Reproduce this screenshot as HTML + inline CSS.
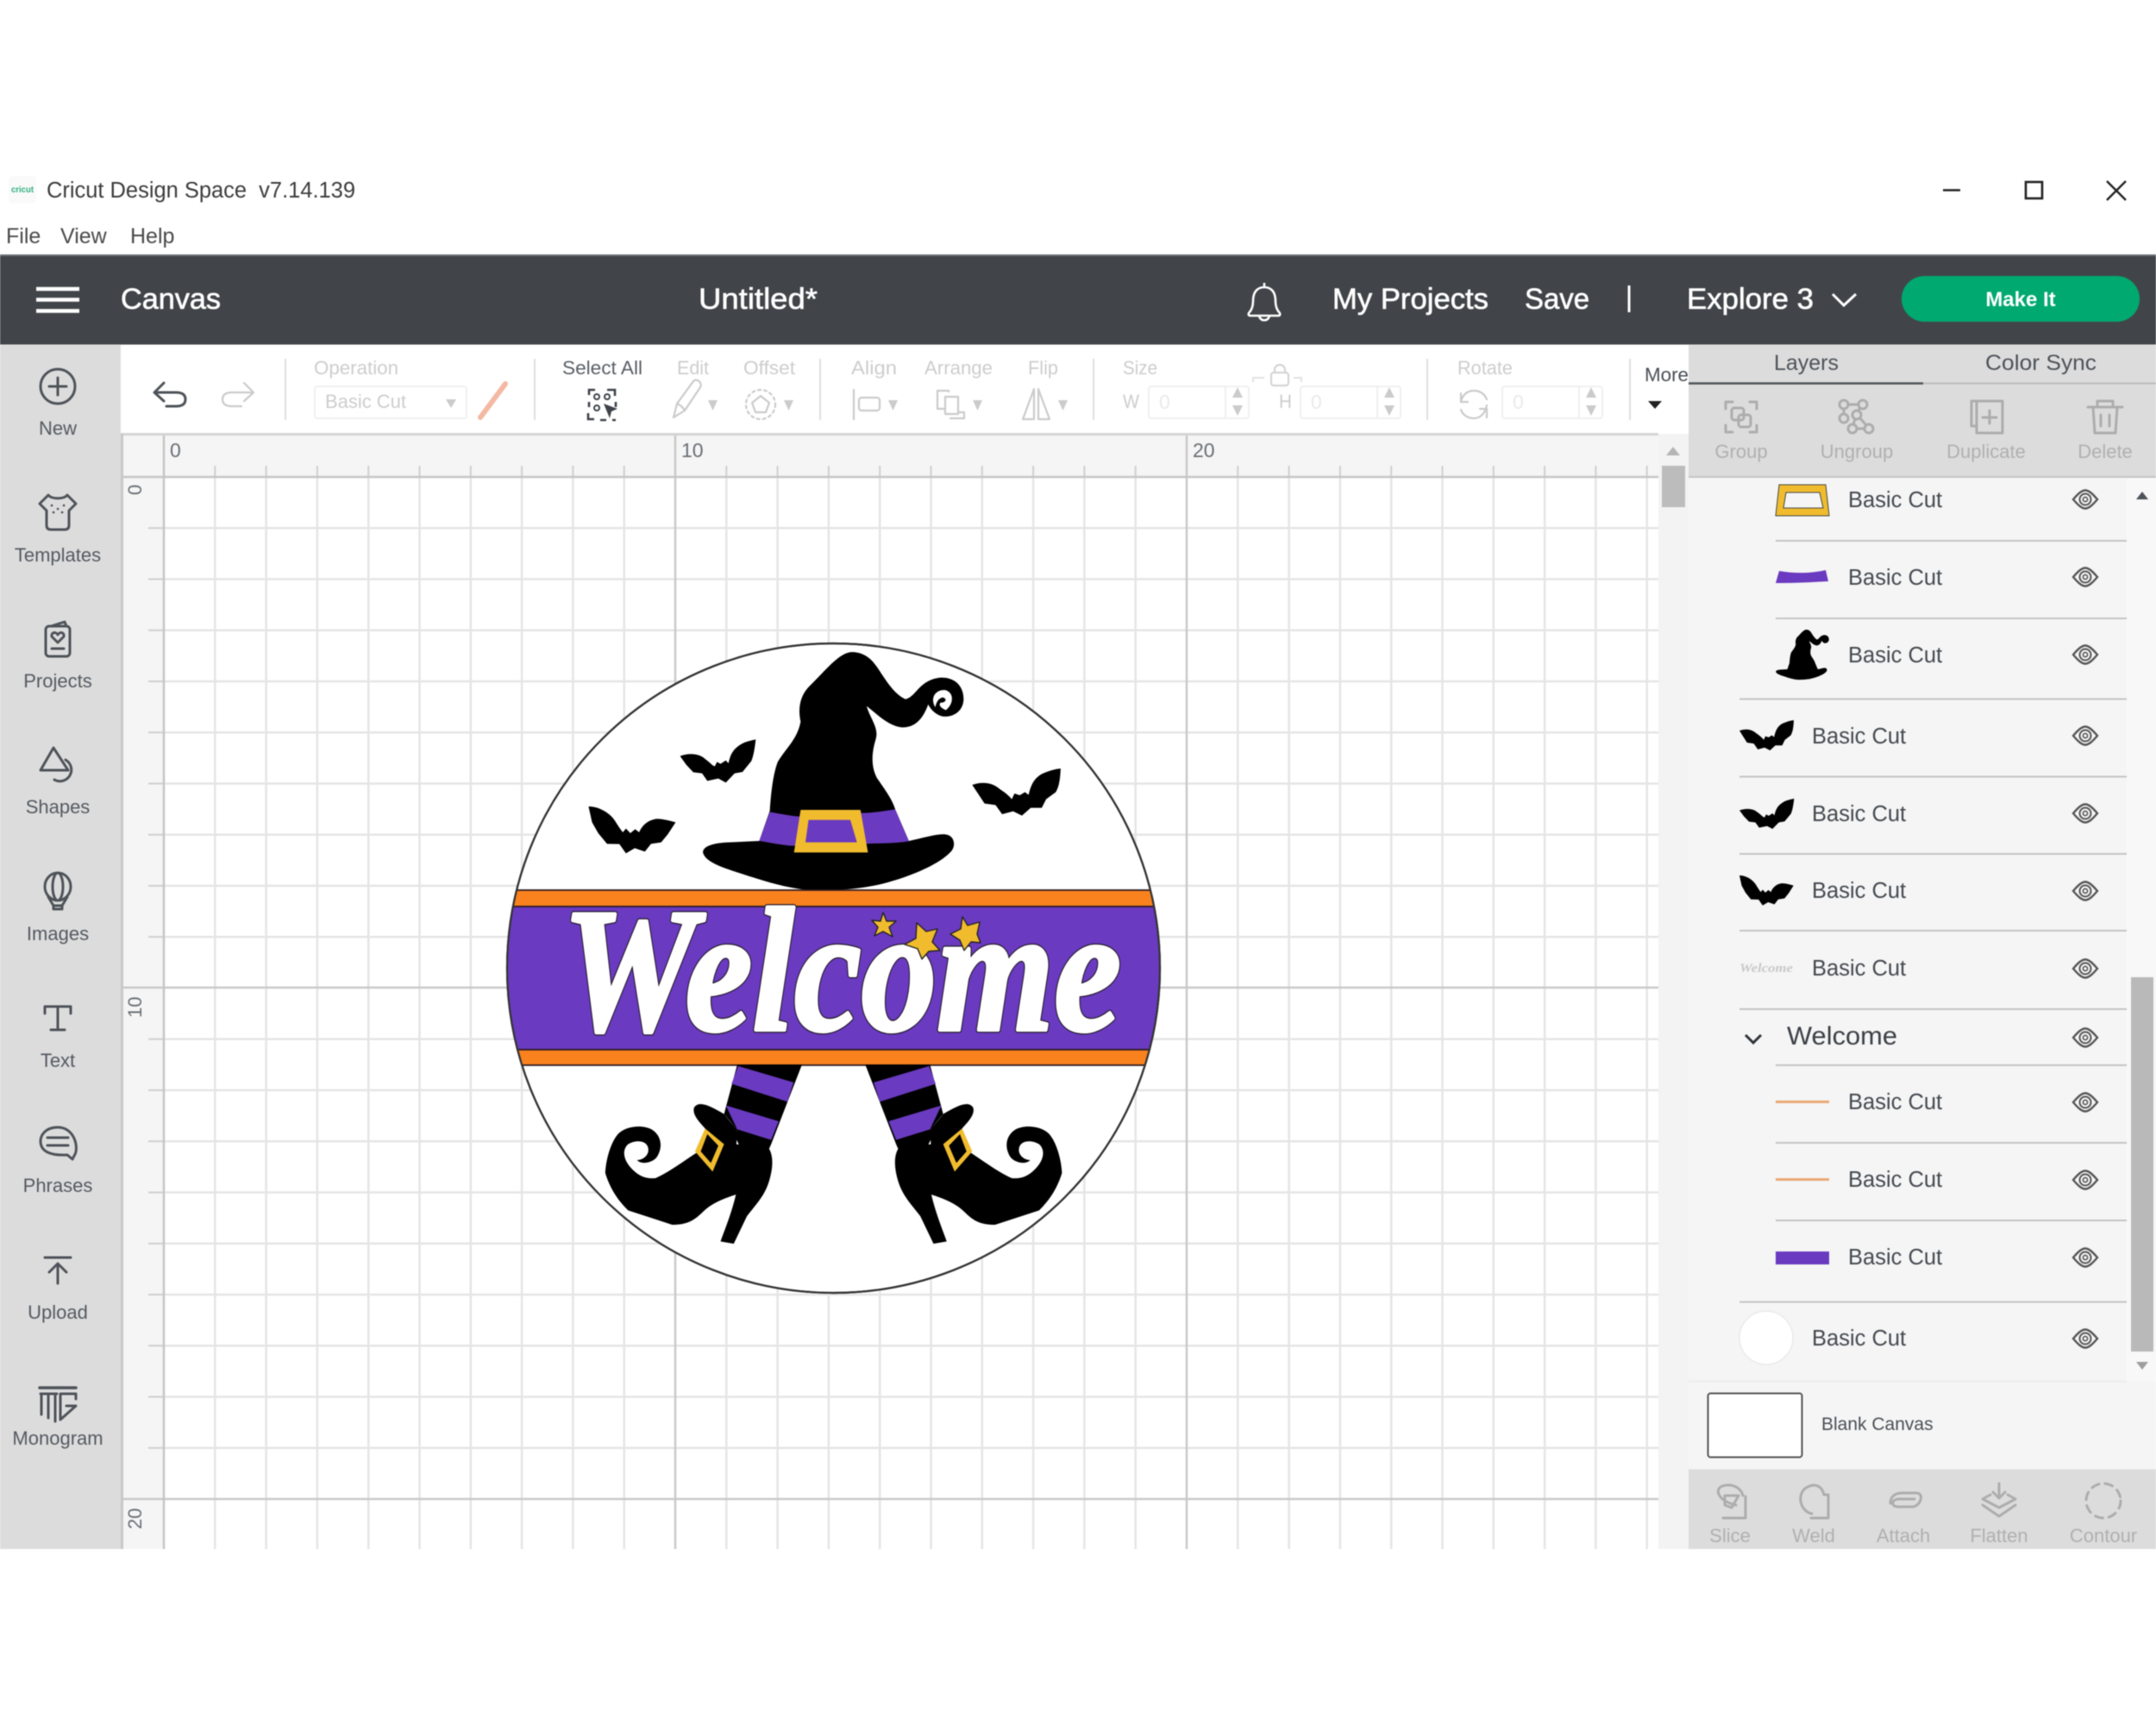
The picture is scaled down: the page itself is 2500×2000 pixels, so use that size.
<!DOCTYPE html>
<html><head><meta charset="utf-8"><title>Cricut Design Space</title>
<style>
html,body{margin:0;padding:0;background:#fff;width:2500px;height:2000px;overflow:hidden}
svg{display:block;filter:blur(.6px)}
text{font-family:"Liberation Sans",sans-serif}
.side{font-size:22px;fill:#555a61;text-anchor:middle}
.tb{font-size:22px;fill:#cdcdcd}
.nav{font-size:34px;fill:#fff;stroke:#fff;stroke-width:.6px}
.row{font-size:25.5px;fill:#454a50}
.act{font-size:22px;fill:#b0b0b0;text-anchor:middle}
.ic{fill:none;stroke:#4e5359;stroke-width:3;stroke-linecap:round;stroke-linejoin:round}
.ti{fill:none;stroke:#cbcbcb;stroke-width:2.2;stroke-linejoin:round;stroke-linecap:round}
.pi{fill:none;stroke:#adadad;stroke-width:3;stroke-linejoin:round;stroke-linecap:round}
.sep{stroke:#dedede;stroke-width:2}
</style></head><body>
<svg xmlns="http://www.w3.org/2000/svg" width="2500" height="2000" viewBox="0 0 2500 2000">
<defs>
<path id="vg" d="M249.3 540V1796M308.6 540V1796M367.9 540V1796M427.2 540V1796M486.5 540V1796M545.8 540V1796M605.1 540V1796M664.4 540V1796M723.7 540V1796M842.3 540V1796M901.6 540V1796M960.9 540V1796M1020.2 540V1796M1079.5 540V1796M1138.8 540V1796M1198.1 540V1796M1257.4 540V1796M1316.7 540V1796M1435.3 540V1796M1494.6 540V1796M1553.9 540V1796M1613.2 540V1796M1672.5 540V1796M1731.8 540V1796M1791.1 540V1796M1850.4 540V1796M1909.7 540V1796M172 612.3H1923M172 671.5H1923M172 730.8H1923M172 790H1923M172 849.3H1923M172 908.5H1923M172 967.8H1923M172 1027H1923M172 1086.3H1923M172 1204.8H1923M172 1264H1923M172 1323.3H1923M172 1382.5H1923M172 1441.8H1923M172 1501H1923M172 1560.3H1923M172 1619.5H1923M172 1678.8H1923"/>
<clipPath id="cv"><rect x="190" y="553" width="1733" height="1243"/></clipPath>
<clipPath id="cr"><path d="M190 540H1923V553H190ZM172 553H190V1796H172Z"/></clipPath>
<clipPath id="disc"><ellipse cx="966.5" cy="1122.5" rx="378.5" ry="376.5"/></clipPath>
<clipPath id="bot"><rect x="1958" y="1703" width="542" height="93"/></clipPath>
<path id="hat" d="M840 108C870 110 885 135 900 170C915 205 935 255 960 272C985 265 990 205 1040 197C1080 195 1095 240 1092 280C1088 320 1065 335 1045 332C1025 325 1015 300 1012 290C1005 320 990 370 955 370C925 368 900 330 872 296C880 340 900 370 893 410C885 450 880 500 895 545C915 590 930 620 937 655L968 765C1000 755 1030 740 1050 742C1072 745 1075 780 1065 800C1045 835 1000 870 950 895C900 920 860 935 760 938C700 935 640 905 590 880C550 860 505 840 500 805C500 785 520 772 560 770L628 765L652 660C655 590 660 530 670 490C690 440 715 410 722 350C715 300 722 260 740 230C780 170 810 108 840 108Z"/>
<path id="batA" d="M448 470C465 460 490 458 505 480C515 490 522 505 527 505L532 490L540 497L552 485L558 495C562 470 565 450 585 430C595 420 610 415 620 412C618 440 615 470 610 487L590 525L572 530L552 562L535 548L510 556L498 530L478 526L462 500Z"/>
<path id="batB" d="M240 645C265 645 290 670 300 695C308 715 315 730 318 735L325 722L335 738L346 724L355 735C362 710 375 692 395 688C410 688 425 695 438 700L420 742L405 770L382 775L368 802L345 790L325 808L310 776L282 775L262 738L248 700Z"/>
<path id="batC" d="M1112 570C1130 560 1155 558 1175 585C1190 600 1198 612 1202 620L1208 600L1220 606L1232 595L1240 605C1245 575 1250 550 1270 532C1285 522 1300 515 1313 513C1312 545 1310 575 1302 595L1280 620L1270 650L1245 650L1225 677L1205 662L1180 672L1165 640L1140 635L1125 600Z"/>
<path id="boot" d="M480 552C490 530 510 540 548 575C560 600 570 615 578 630L576 680L650 695C660 720 660 760 650 810C640 860 620 890 600 930L570 1026L540 1018C550 975 565 920 575 855C545 870 520 885 500 915C480 945 465 960 430 960L330 910C310 880 290 840 278 780C280 720 295 660 310 640C330 615 365 612 385 630C405 650 410 690 395 725C385 745 360 752 350 735C365 735 380 715 375 690C370 665 345 665 330 680C315 700 318 740 345 775C360 795 375 800 392 798C420 780 455 740 490 705L505 625C490 600 475 575 480 552Z"/>
<symbol id="eye" viewBox="0 0 32 24" overflow="visible"><path d="M2 12C8 5 12 1.500 16 1.500C20 1.500 24 5 30 12C24 19 20 22.500 16 22.500C12 22.500 8 19 2 12Z" fill="none" stroke="#555" stroke-width="2.400"/><circle cx="16" cy="12" r="6.500" fill="none" stroke="#555" stroke-width="2"/><circle cx="16" cy="12" r="2.600" fill="none" stroke="#555" stroke-width="1.600"/></symbol>
</defs>

<rect width="2500" height="2000" fill="#fff"/>

<!-- title bar -->
<rect x="10" y="204" width="32" height="32" rx="5" fill="#fafafa"/>
<text x="13" y="223" font-size="10" font-weight="bold" fill="#2fae80" textLength="26" lengthAdjust="spacingAndGlyphs">cricut</text>
<text x="54" y="229" font-size="25.500" fill="#3c3c3c" textLength="358" lengthAdjust="spacingAndGlyphs" xml:space="preserve">Cricut Design Space  v7.14.139</text>
<text x="7" y="282" font-size="25" fill="#4a4a4a">File</text>
<text x="70" y="282" font-size="25" fill="#4a4a4a">View</text>
<text x="151" y="282" font-size="25" fill="#4a4a4a">Help</text>
<path d="M2253 220.500H2273" stroke="#222" stroke-width="2.400"/>
<rect x="2349" y="211" width="19" height="19" fill="none" stroke="#222" stroke-width="2.600"/>
<path d="M2443 210L2465 232M2465 210L2443 232" stroke="#222" stroke-width="2.400"/>

<!-- header -->
<rect x="0" y="295" width="2500" height="104.500" fill="#414549"/>
<rect x="0" y="295" width="2500" height="2" fill="#6c7074"/>
<path d="M42 335H92M42 347.500H92M42 360.500H92" stroke="#fff" stroke-width="4.500"/>
<text class="nav" x="140" y="358" textLength="116" lengthAdjust="spacingAndGlyphs">Canvas</text>
<text class="nav" x="810" y="358" textLength="138" lengthAdjust="spacingAndGlyphs">Untitled*</text>
<path d="M1466 328V333M1466 333C1456 333 1453 341 1453 349C1453 356 1451 360 1448 363Q1447 366 1450 366H1482Q1485 366 1484 363C1481 360 1479 356 1479 349C1479 341 1476 333 1466 333ZM1460 366C1461 373 1471 373 1472 366" fill="none" stroke="#fff" stroke-width="2.600" stroke-linejoin="round"/>
<text class="nav" x="1545" y="358" textLength="181" lengthAdjust="spacingAndGlyphs">My Projects</text>
<text class="nav" x="1768" y="358" textLength="75" lengthAdjust="spacingAndGlyphs">Save</text>
<rect x="1887.500" y="331" width="3" height="31" fill="#fff"/>
<text class="nav" x="1956" y="358" textLength="147" lengthAdjust="spacingAndGlyphs">Explore 3</text>
<path d="M2125 341L2138 354L2152 341" fill="none" stroke="#fff" stroke-width="3"/>
<rect x="2205" y="320" width="276" height="53" rx="26.500" fill="#00a96f"/>
<text x="2343" y="355" font-size="24" font-weight="bold" fill="#fff" text-anchor="middle">Make It</text>

<!-- left sidebar -->
<rect x="0" y="400" width="140" height="1396" fill="#dcdcdc"/>

<!-- toolbar -->
<rect x="140" y="400" width="1818" height="103" fill="#fff"/>

<!-- canvas + rulers -->
<rect x="140" y="503" width="1783" height="1293" fill="#fff"/>
<rect x="140" y="505" width="1783" height="48" fill="#f5f5f5"/>
<rect x="140" y="505" width="50" height="1291" fill="#f5f5f5"/>
<use href="#vg" fill="none" stroke="#e5e5e5" stroke-width="2.500" clip-path="url(#cv)"/>
<use href="#vg" fill="none" stroke="#cfcfcf" stroke-width="2" clip-path="url(#cr)"/>
<path d="M783 505V1796M1376 505V1796M140 1145H1923M140 1738H1923" stroke="#c9c9c9" stroke-width="2.500" fill="none"/>
<path d="M190 505V1796M140 553H1923" stroke="#c6c6c6" stroke-width="2.500" fill="none"/>
<rect x="140" y="502" width="1783" height="3" fill="#d4d4d4"/>
<rect x="140" y="503" width="3" height="1293" fill="#c8c8c8"/>
<text x="197" y="530" font-size="23" fill="#6a6f75">0</text>
<text x="790" y="530" font-size="23" fill="#6a6f75">10</text>
<text x="1383" y="530" font-size="23" fill="#6a6f75">20</text>
<text transform="translate(164 574) rotate(-90)" font-size="22" fill="#6a6f75">0</text>
<text transform="translate(164 1180) rotate(-90)" font-size="22" fill="#6a6f75">10</text>
<text transform="translate(164 1773) rotate(-90)" font-size="22" fill="#6a6f75">20</text>

<!-- canvas scrollbar -->
<rect x="1923" y="503" width="35" height="1293" fill="#f3f3f3"/>
<path d="M1932 528L1940 518L1948 528Z" fill="#b5b5b5"/>
<rect x="1927" y="540" width="27" height="48" fill="#bcbcbc"/>

<!-- ARTWORK -->
<ellipse cx="966.500" cy="1122.500" rx="378.500" ry="376.500" fill="#fff" stroke="#333" stroke-width="2.200"/>
<g transform="translate(560 720) scale(.5102 .33333)">
<use href="#hat" fill="#000"/>
<path d="M652 664C680 672 700 678 720 680L860 668C885 668 915 660 937 655L968 766C930 775 900 772 870 775L705 782C680 780 650 770 628 765Z" fill="#6a3ac0"/>
<path d="M1028 300C1015 265 1030 238 1050 240C1072 248 1070 290 1052 310C1040 302 1035 292 1040 284C1052 285 1056 270 1045 266C1035 268 1030 285 1028 300Z" fill="#fff"/>
<path d="M722 657H858L875 805H707ZM740 692L733 770H850L835 692Z" fill="#f0bc2e" fill-rule="evenodd"/>
<use href="#batA" fill="#000"/>
<use href="#batB" fill="#000"/>
<use href="#batC" fill="#000"/>
</g>
<g clip-path="url(#disc)">
<rect x="580" y="1032" width="780" height="19" fill="#f9821e"/>
<rect x="580" y="1051" width="780" height="166" fill="#6a3ac0"/>
<rect x="580" y="1217" width="780" height="18" fill="#f9821e"/>
<path d="M580 1032H1360M580 1051H1360M580 1217H1360M580 1235H1360" stroke="#2a1a22" stroke-width="1.800"/>
</g>
<ellipse cx="966.500" cy="1122.500" rx="378.500" ry="376.500" fill="none" stroke="#333" stroke-width="2.200"/>
<text x="652" y="1194" font-size="205" font-style="italic" font-weight="bold" fill="#fff" stroke="#241a2a" stroke-width="7" stroke-linejoin="round" textLength="648" lengthAdjust="spacingAndGlyphs" style="font-family:'Liberation Serif',serif">Welcome</text>
<text x="652" y="1194" font-size="205" font-style="italic" font-weight="bold" fill="#fff" stroke="#fff" stroke-width="4.500" stroke-linejoin="round" textLength="648" lengthAdjust="spacingAndGlyphs" style="font-family:'Liberation Serif',serif">Welcome</text>
<g fill="#f0bc2e" stroke="#222" stroke-width="1.400" stroke-linejoin="round">
<path d="M1024 1058L1028 1068L1039 1068L1031 1075L1035 1086L1024 1080L1014 1085L1018 1075L1011 1067L1021 1068Z"/>
<path d="M1063 1070L1074 1080L1087 1077L1081 1092L1090 1102L1077 1103L1069 1112L1064 1100L1049 1095L1062 1088Z"/>
<path d="M1116 1063L1122 1073L1136 1069L1133 1083L1137 1093L1126 1092L1118 1102L1113 1090L1102 1083L1114 1077Z"/>
</g>
<g transform="translate(560 1100) scale(.5102 .33333)">
<g>
<path d="M578 403H725L655 680L650 697L585 692L575 660L578 630L548 575Z" fill="#000"/>
<path d="M580 408L706 465L692 532L565 470ZM552 545L672 600L655 665L578 628Z" fill="#6a3ac0"/>
<use href="#boot" fill="#000"/>
<path d="M505 625L548 680L522 775L482 705ZM510 645L495 705L518 745L535 685Z" fill="#f0bc2e" fill-rule="evenodd"/>
</g>
<g transform="translate(1594 0) scale(-1 1)">
<path d="M578 403H725L655 680L650 697L585 692L575 660L578 630L548 575Z" fill="#000"/>
<path d="M580 408L706 465L692 532L565 470ZM552 545L672 600L655 665L578 628Z" fill="#6a3ac0"/>
<use href="#boot" fill="#000"/>
<path d="M505 625L548 680L522 775L482 705ZM510 645L495 705L518 745L535 685Z" fill="#f0bc2e" fill-rule="evenodd"/>
</g>
</g>

<!-- sidebar icons + labels -->
<g class="ic">
<circle cx="67" cy="448" r="20"/><path d="M67 438V458M57 448H77"/>
<path d="M56 574C60 579 74 579 78 574L88 584L80 592V609Q80 614 75 614H59Q54 614 54 609V592L46 584Z"/>
<path d="M60 586h.1M74 586h.1M62 594h.1M72 594h.1M67 590h.1" stroke-width="2.600"/>
<rect x="53" y="726" width="28" height="35" rx="4"/><path d="M59 726L75 721L77 726M60 752H74M67 745L60 738C59 733 65 732 67 736C69 732 75 733 74 738Z"/>
<path d="M62 867L47 893H79Z"/><path d="M63 904A13 13 0 1 0 76 881"/>
<ellipse cx="67" cy="1028" rx="15" ry="16"/><ellipse cx="67" cy="1028" rx="6" ry="16"/><path d="M56 1040L62 1050H72L78 1040M62 1050V1054H72V1050"/>
<path d="M52 1175V1167H82V1175M67 1167V1194M59 1194H75"/>
<path d="M86 1340C92 1332 87 1307 67 1307C52 1307 47 1317 47 1323C47 1335 58 1340 78 1339L84 1344ZM55 1319H79M55 1328H79"/>
<path d="M52 1458H82M67 1488V1466M57 1475L67 1465L77 1475"/>
<path d="M46 1609H88" stroke-width="3.500"/><path d="M47 1616H66M48 1616V1640M56 1616V1644M64 1616V1648M70 1616V1646L88 1630H77M70 1616H88V1622"/>
</g>
<text class="side" x="67" y="504">New</text>
<text class="side" x="67" y="651">Templates</text>
<text class="side" x="67" y="797">Projects</text>
<text class="side" x="67" y="943">Shapes</text>
<text class="side" x="67" y="1090">Images</text>
<text class="side" x="67" y="1237">Text</text>
<text class="side" x="67" y="1382">Phrases</text>
<text class="side" x="67" y="1529">Upload</text>
<text class="side" x="67" y="1675">Monogram</text>

<!-- toolbar contents -->
<path d="M190 444L179 455L190 465M180 455H204Q215 455 215 463Q215 471 204 471H193" fill="none" stroke="#4e5359" stroke-width="3" stroke-linecap="round" stroke-linejoin="round"/>
<path d="M283 444L294 455L283 465M293 455H269Q258 455 258 463Q258 471 269 471H280" class="ti" stroke-width="3"/>
<path class="sep" d="M331 416V487M620 416V487M951 416V487M1268 416V487M1655 416V487M1890 416V487"/>
<text class="tb" x="364" y="434" textLength="98" lengthAdjust="spacingAndGlyphs">Operation</text>
<rect x="365" y="448" width="176" height="37" rx="3" fill="#fff" stroke="#f0f0f0" stroke-width="2"/>
<text class="tb" x="377" y="473" textLength="94" lengthAdjust="spacingAndGlyphs">Basic Cut</text>
<path d="M517 463H529L523 473Z" fill="#cbcbcb"/>
<path d="M557 484L586 445" stroke="#f4b9a2" stroke-width="6" stroke-linecap="round"/>
<text x="652" y="434" font-size="22" fill="#5a5f66" textLength="93" lengthAdjust="spacingAndGlyphs">Select All</text>
<path d="M683 458V452H690M704 452H713V459M714 466V472M683 466V472M682 479V486H689M696 487H703M710 487H714" fill="none" stroke="#3e4349" stroke-width="2.600"/>
<circle cx="692" cy="460" r="3" fill="none" stroke="#3e4349" stroke-width="2"/><circle cx="704" cy="460" r="3" fill="none" stroke="#3e4349" stroke-width="2"/><circle cx="692" cy="473" r="3" fill="none" stroke="#3e4349" stroke-width="2"/>
<path d="M700 468L716 474L709 477L707 485Z" fill="#3e4349"/>
<text class="tb" x="785" y="434" textLength="37" lengthAdjust="spacingAndGlyphs">Edit</text>
<path class="ti" d="M781 484L785 468L804 442C807 438 815 443 812 449L794 476ZM785 468C788 469 792 472 794 476"/>
<path d="M821 464H832L826.500 476Z" fill="#cbcbcb"/>
<text class="tb" x="862" y="434" textLength="60" lengthAdjust="spacingAndGlyphs">Offset</text>
<circle class="ti" cx="882" cy="469" r="17" stroke-dasharray="3 4"/><path class="ti" d="M882 459L892 467L888 478H876L872 467Z"/>
<path d="M909 464H920L914.500 476Z" fill="#cbcbcb"/>
<text class="tb" x="987" y="434" textLength="53" lengthAdjust="spacingAndGlyphs">Align</text>
<path class="ti" d="M990 452V486"/><rect class="ti" x="996" y="461" width="24" height="15" rx="3"/>
<path d="M1030 464H1041L1035.500 476Z" fill="#cbcbcb"/>
<text class="tb" x="1072" y="434" textLength="79" lengthAdjust="spacingAndGlyphs">Arrange</text>
<path class="ti" d="M1100 454V453H1087V474H1095M1096 460H1111V480H1096ZM1111 478H1118V485H1102"/>
<path d="M1128 464H1139L1133.500 476Z" fill="#cbcbcb"/>
<text class="tb" x="1192" y="434" textLength="35" lengthAdjust="spacingAndGlyphs">Flip</text>
<path class="ti" d="M1199 451L1186 486H1199ZM1204 451L1217 486H1204Z"/>
<path d="M1227 464H1238L1232.500 476Z" fill="#cbcbcb"/>
<text class="tb" x="1302" y="434" textLength="40" lengthAdjust="spacingAndGlyphs">Size</text>
<text class="tb" x="1302" y="473" textLength="19" lengthAdjust="spacingAndGlyphs">W</text>
<rect x="1332" y="448" width="116" height="37" rx="3" fill="#fff" stroke="#f0f0f0" stroke-width="2"/>
<text x="1344" y="474" font-size="23" fill="#eaeaea">0</text>
<path d="M1421 448V485" stroke="#f0f0f0" stroke-width="2"/>
<path d="M1429 461H1441L1435 449ZM1429 470H1441L1435 482Z" fill="#cbcbcb"/>
<path d="M1453 443V438H1466M1500 438H1509V443" fill="none" stroke="#e2e2e2" stroke-width="2"/>
<rect x="1474" y="432" width="20" height="15" rx="3" fill="none" stroke="#d4d4d4" stroke-width="2.200"/><path d="M1478 432V429C1478 421 1490 421 1490 429V432M1484 440h.1" fill="none" stroke="#d4d4d4" stroke-width="2.200"/>
<text class="tb" x="1483" y="473" textLength="15" lengthAdjust="spacingAndGlyphs">H</text>
<rect x="1508" y="448" width="116" height="37" rx="3" fill="#fff" stroke="#f0f0f0" stroke-width="2"/>
<text x="1520" y="474" font-size="23" fill="#eaeaea">0</text>
<path d="M1597 448V485" stroke="#f0f0f0" stroke-width="2"/>
<path d="M1605 461H1617L1611 449ZM1605 470H1617L1611 482Z" fill="#cbcbcb"/>
<text class="tb" x="1690" y="434" textLength="64" lengthAdjust="spacingAndGlyphs">Rotate</text>
<path class="ti" d="M1694 466C1696 457 1702 453 1709 453C1716 453 1721 456 1724 463M1724 470C1722 480 1716 485 1709 485C1702 485 1696 481 1694 475M1694 456V466H1702M1724 484V474H1716"/>
<rect x="1742" y="448" width="116" height="37" rx="3" fill="#fff" stroke="#f0f0f0" stroke-width="2"/>
<text x="1754" y="474" font-size="23" fill="#eaeaea">0</text>
<path d="M1831 448V485" stroke="#f0f0f0" stroke-width="2"/>
<path d="M1839 461H1851L1845 449ZM1839 470H1851L1845 482Z" fill="#cbcbcb"/>
<text x="1907" y="442" font-size="22" fill="#4a4f55" textLength="51" lengthAdjust="spacingAndGlyphs">More</text>
<path d="M1911 465H1927L1919 474Z" fill="#222"/>

<!-- right panel -->
<rect x="1958" y="400" width="542" height="154" fill="#dcdcdc"/>
<path d="M2230 444.500H2500" stroke="#bdbdbd" stroke-width="2"/>
<path d="M1958 444.500H2230" stroke="#4e5359" stroke-width="2.500"/>
<text x="2057" y="429" font-size="25" fill="#4e5359" textLength="75" lengthAdjust="spacingAndGlyphs">Layers</text>
<text x="2302" y="429" font-size="25" fill="#4e5359" textLength="129" lengthAdjust="spacingAndGlyphs">Color Sync</text>
<path d="M1958 553H2500" stroke="#c4c4c4" stroke-width="2"/>
<g class="pi">
<path d="M2009 466H2001V474M2029 466H2037V474M2009 501H2001V493M2029 501H2037V493"/><rect x="2008" y="473" width="14" height="14" rx="3"/><rect x="2016" y="481" width="14" height="14" rx="3"/>
<circle cx="2138" cy="469" r="5"/><circle cx="2160" cy="469" r="5"/><circle cx="2138" cy="485" r="5"/><circle cx="2153" cy="481" r="5"/><circle cx="2167" cy="497" r="5"/><circle cx="2148" cy="497" r="5"/><path d="M2143 469H2155M2138 474V480M2156 474L2155 477M2157 485L2164 493M2151 486L2149 492M2153 497H2162"/>
<path d="M2296 465H2286V494H2292M2292 474V465H2322V502H2292V474M2307 476V491M2299 484H2315" transform="translate(0 0)"/>
<path d="M2421 472H2461M2432 472V465H2450V472M2427 472L2429 502H2453L2455 472M2436 481V494M2446 481V494"/>
</g>
<text class="act" x="2019" y="531">Group</text>
<text class="act" x="2153" y="531">Ungroup</text>
<text class="act" x="2303" y="531">Duplicate</text>
<text class="act" x="2441" y="531">Delete</text>

<!-- list -->
<rect x="1958" y="554" width="542" height="1150" fill="#f5f5f5"/>
<rect x="2466" y="554" width="34" height="1047" fill="#f8f8f8"/>
<path d="M1958 1601.500H2466" stroke="#ededed" stroke-width="2"/>
<path d="M2059 627H2466M2059 717H2466M2017 810.500H2466M2017 900.500H2466M2017 990H2466M2017 1079H2466M2017 1170H2466M2059 1235H2466M2059 1325H2466M2059 1415H2466M2017 1509.500H2466" stroke="#c4c4c4" stroke-width="2"/>
<path d="M2063 562H2117L2121 598H2059ZM2071 571L2068 589H2114L2110 571Z" fill="#f0bc2e" fill-rule="evenodd" stroke="#444" stroke-width="1"/>
<path d="M2063 662C2080 665 2100 665 2117 661L2120 674C2100 675 2085 676 2059 676Z" fill="#6a3ac0"/>
<g transform="translate(2059 730) scale(.1039 .0701) translate(-498 -108)"><use href="#hat" fill="#000"/></g>
<g transform="translate(2017 835) scale(.3134 .2134) translate(-1112 -513)"><use href="#batC" fill="#000"/></g>
<g transform="translate(2017 926) scale(.3684 .2333) translate(-448 -412)"><use href="#batA" fill="#000"/></g>
<g transform="translate(2017 1015) scale(.3166 .2135) translate(-240 -645)"><use href="#batB" fill="#000"/></g>
<text x="2017" y="1127" font-size="15" font-style="italic" font-weight="bold" fill="#c9c9c9" textLength="62" lengthAdjust="spacingAndGlyphs" style="font-family:'Liberation Serif',serif">Welcome</text>
<path d="M2059 1277.500H2121M2059 1367.500H2121" stroke="#eba873" stroke-width="3"/>
<rect x="2059" y="1451" width="62" height="15" fill="#6a3ac0"/>
<circle cx="2048" cy="1551" r="31" fill="#fff" stroke="#eaeaea" stroke-width="1.500"/>
<g class="row">
<text x="2143" y="588">Basic Cut</text>
<text x="2143" y="678">Basic Cut</text>
<text x="2143" y="768">Basic Cut</text>
<text x="2101" y="862">Basic Cut</text>
<text x="2101" y="952">Basic Cut</text>
<text x="2101" y="1041">Basic Cut</text>
<text x="2101" y="1131">Basic Cut</text>
<text x="2143" y="1286">Basic Cut</text>
<text x="2143" y="1376">Basic Cut</text>
<text x="2143" y="1466">Basic Cut</text>
<text x="2101" y="1560">Basic Cut</text>
</g>
<path d="M2024 1200L2033 1209L2042 1200" fill="none" stroke="#2f3337" stroke-width="3"/>
<text x="2072" y="1211" font-size="30" fill="#3c4046" textLength="128" lengthAdjust="spacingAndGlyphs">Welcome</text>
<use href="#eye" x="2402" y="567" width="32" height="24"/>
<use href="#eye" x="2402" y="657" width="32" height="24"/>
<use href="#eye" x="2402" y="747" width="32" height="24"/>
<use href="#eye" x="2402" y="841" width="32" height="24"/>
<use href="#eye" x="2402" y="931" width="32" height="24"/>
<use href="#eye" x="2402" y="1021" width="32" height="24"/>
<use href="#eye" x="2402" y="1111" width="32" height="24"/>
<use href="#eye" x="2402" y="1191" width="32" height="24"/>
<use href="#eye" x="2402" y="1266" width="32" height="24"/>
<use href="#eye" x="2402" y="1356" width="32" height="24"/>
<use href="#eye" x="2402" y="1446" width="32" height="24"/>
<use href="#eye" x="2402" y="1540" width="32" height="24"/>
<path d="M2477 579L2484 570L2491 579Z" fill="#4e5359"/>
<rect x="2471" y="1133" width="26" height="434" fill="#b9b9b9"/>
<path d="M2477 1579L2484 1588L2491 1579Z" fill="#9e9e9e"/>

<rect x="1980.500" y="1615.500" width="109" height="74" rx="3" fill="#fff" stroke="#555" stroke-width="2"/>
<text x="2112" y="1658" font-size="21" fill="#4a4f55">Blank Canvas</text>

<!-- bottom bar -->
<rect x="1958" y="1703.500" width="542" height="92.500" fill="#dcdcdc"/>
<g class="pi">
<path d="M2013 1745C1990 1740 1986 1723 2002 1722C2011 1721 2019 1726 2021 1734M2000 1734H2016L2008 1748L2000 1745ZM2024 1735V1760H1998"/>
<path d="M2101 1755C2086 1752 2083 1730 2096 1724C2106 1719 2113 1724 2115 1733H2120V1760H2100"/>
<path d="M2192 1743C2192 1733 2200 1731 2206 1731H2222C2232 1731 2227 1747 2217 1747H2201C2192 1747 2193 1738 2202 1738H2220"/>
<path d="M2318 1720V1737M2311 1730L2318 1737L2325 1730M2299 1738L2318 1748L2337 1738L2328 1733M2299 1745L2318 1758L2337 1745M2308 1733L2299 1738"/>
<circle cx="2439" cy="1740" r="20" stroke-dasharray="9 7"/>
</g>
<g clip-path="url(#bot)">
<text class="act" x="2006" y="1788">Slice</text>
<text class="act" x="2103" y="1788">Weld</text>
<text class="act" x="2207" y="1788">Attach</text>
<text class="act" x="2318" y="1788">Flatten</text>
<text class="act" x="2439" y="1788">Contour</text>
</g>
</svg>
</body></html>
